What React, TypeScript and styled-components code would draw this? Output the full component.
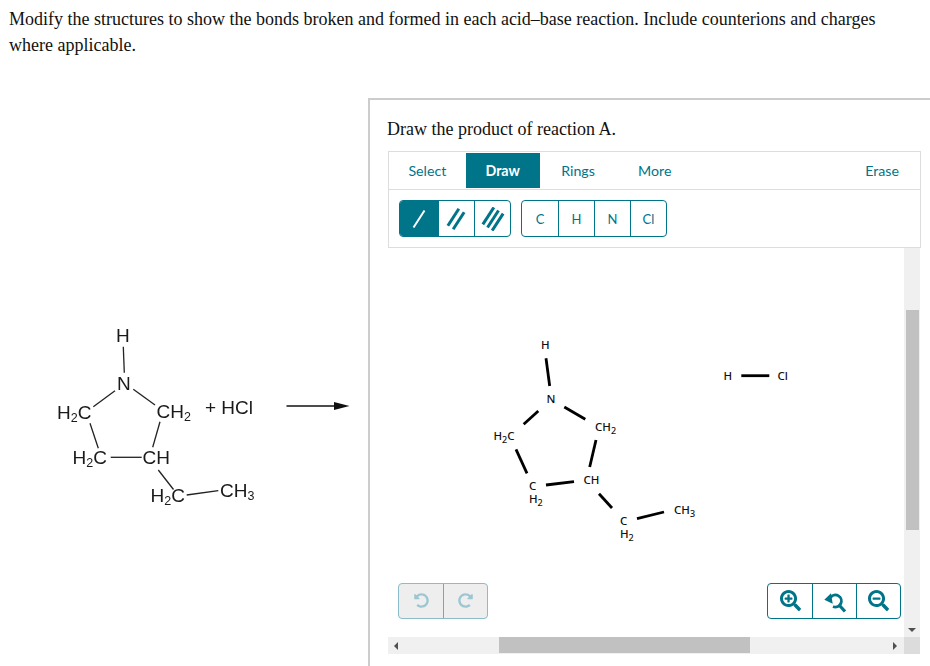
import React from 'react';
import styled, { createGlobalStyle } from 'styled-components';
import { FaRedoAlt, FaSearchMinus, FaSearchPlus, FaUndoAlt } from 'react-icons/fa';

const TEAL = '#007489';

const GlobalStyle = createGlobalStyle`
  html, body {
    margin: 0;
    padding: 0;
    background: #fff;
    overflow: hidden;
  }
  * {
    box-sizing: border-box;
  }
`;

const Page = styled.div`
  width: 930px;
  height: 666px;
  overflow: hidden;
  display: flex;
  flex-direction: column;
`;

const Prompt = styled.p`
  margin: 0;
  height: 98px;
  padding: 6px 40px 0 9px;
  font-family: 'Liberation Serif', serif;
  font-size: 18px;
  line-height: 26px;
  color: #111;
`;

const Row = styled.div`
  flex: 1;
  display: flex;
  min-height: 0;
`;

const Reaction = styled.div`
  width: 368px;
  flex: none;
  svg {
    display: block;
    filter: blur(0.35px);
  }
`;

const Panel = styled.section`
  flex: 1;
  border-left: 2px solid #ccc;
  border-top: 2px solid #ccc;
  padding: 19px 9px 0 18px;
  display: flex;
  flex-direction: column;
`;

const Question = styled.h2`
  margin: 0 0 12px -1px;
  font-family: 'Liberation Serif', serif;
  font-weight: 400;
  font-size: 18px;
  line-height: 20px;
  color: #111;
`;

const Toolbar = styled.div`
  border: 1.5px solid #ddd;
  border-bottom-width: 1px;
`;

const TabRow = styled.div`
  height: 38px;
  display: flex;
  align-items: flex-start;
  padding-top: 0.5px;
  border-bottom: 1.5px solid #ddd;
  font-family: 'Lato', sans-serif;
  font-size: 14.2px;
`;

const Tab = styled.button<{ $active?: boolean }>`
  width: ${(p) => (p.$active ? 74 : 76.7)}px;
  height: 35px;
  border: 0;
  padding: 0;
  font: inherit;
  font-weight: ${(p) => (p.$active ? 700 : 400)};
  color: ${(p) => (p.$active ? '#fff' : TEAL)};
  background: ${(p) => (p.$active ? TEAL : 'transparent')};
`;

const EraseTab = styled(Tab)`
  margin-left: auto;
  width: auto;
  padding-right: 21px;
`;

const ToolRow = styled.div`
  height: 57px;
  display: flex;
  align-items: center;
  gap: 10px;
  padding-left: 10px;
`;

const ButtonGroup = styled.div<{ $faded?: boolean }>`
  height: 36.5px;
  display: flex;
  border: 1px solid ${(p) => (p.$faded ? '#8bbcc7' : TEAL)};
  border-radius: 4px;
  overflow: hidden;
  background: ${(p) => (p.$faded ? '#eee' : '#fff')};
`;

const ToolButton = styled.button<{ $active?: boolean; $w: number; $faded?: boolean }>`
  width: ${(p) => p.$w}px;
  padding: 0;
  border: 0;
  border-left: 1px solid ${(p) => (p.$faded ? '#6fabb9' : TEAL)};
  background: ${(p) => (p.$active ? TEAL : 'transparent')};
  color: ${(p) => (p.$active ? '#fff' : p.$faded ? '#9cc6d1' : TEAL)};
  font-family: 'Lato', sans-serif;
  font-size: 13px;
  display: flex;
  align-items: center;
  justify-content: center;
  &:first-child {
    border-left: 0;
  }
`;

const Editor = styled.div`
  flex: 1;
  display: grid;
  grid-template-columns: 516px 16px;
  grid-template-rows: 389px 17px;
`;

const Viewport = styled.div`
  position: relative;
  overflow: hidden;
  svg.drawing {
    display: block;
  }
`;

const FloatingGroup = styled(ButtonGroup)<{ $side: 'left' | 'right' }>`
  position: absolute;
  bottom: 18px;
  ${(p) => (p.$side === 'left' ? 'left: 10px;' : 'right: 3px;')}
`;

const VerticalTrack = styled.div`
  background: #f0f0f0;
  padding: 62px 1px 0 2px;
  position: relative;
`;

const VerticalThumb = styled.div`
  height: 220px;
  background: #c1c1c1;
`;

const HorizontalTrack = styled.div`
  background: #f0f0f0;
  padding-left: 111px;
  position: relative;
`;

const HorizontalThumb = styled.div`
  width: 251px;
  height: 16px;
  background: #c1c1c1;
`;

const Corner = styled.div`
  background: #dcdcdc;
`;

const ArrowLeft = styled.i`
  position: absolute;
  left: 6px;
  top: 5px;
  border: 4px solid transparent;
  border-left: 0;
  border-right: 4px solid #505050;
`;

const ArrowRight = styled.i`
  position: absolute;
  right: 7px;
  top: 5px;
  border: 4px solid transparent;
  border-right: 0;
  border-left: 4px solid #505050;
`;

const ArrowDown = styled.i`
  position: absolute;
  left: 4px;
  bottom: 5px;
  border: 4px solid transparent;
  border-bottom: 0;
  border-top: 4px solid #505050;
`;

const Formula = styled.text`
  font-family: 'Liberation Sans', sans-serif;
  font-size: 19px;
  fill: #1a1a1a;
  tspan.sub {
    font-size: 12.5px;
  }
`;

const Atom = styled.text`
  font-family: 'Noto Sans', sans-serif;
  font-weight: 500;
  font-size: 11.5px;
  fill: #111;
  tspan.sub {
    font-size: 9px;
  }
`;

type Line = [number, number, number, number];

const reactantBonds: Line[] = [
  [123.3, 346.7, 124.3, 372.7],
  [115, 390.7, 93.3, 406.7],
  [133.3, 389.3, 155, 405],
  [90, 423.3, 98.3, 448.3],
  [110.7, 457.3, 141.7, 457.3],
  [160, 421.7, 152.7, 447.3],
  [158.3, 470, 173.5, 489.5],
  [186.7, 495, 218.3, 490.7],
];

const productBonds: Line[] = [
  [546, 358.3, 549.7, 386],
  [538.3, 411, 523.7, 424.3],
  [564.3, 407, 585.3, 419.3],
  [516, 449.3, 527, 473.3],
  [546, 485, 574, 481.7],
  [596, 440, 589.7, 467],
  [599, 493.7, 612, 508],
  [637, 518.7, 664, 512],
  [741.3, 375.7, 769.3, 375.7],
];

function Bonds({ lines, width, color }: { lines: Line[]; width: number; color: string }) {
  return (
    <g stroke={color} strokeWidth={width} fill="none">
      {lines.map((l, i) => (
        <line key={i} x1={l[0]} y1={l[1]} x2={l[2]} y2={l[3]} />
      ))}
    </g>
  );
}

function BondIcon({ count, color }: { count: number; color: string }) {
  const offsets = count === 1 ? [0] : count === 2 ? [-3.2, 3.2] : [-5.6, 0, 5.6];
  return (
    <svg width="24" height="24" viewBox="0 0 24 24">
      {offsets.map((o) => (
        <line
          key={o}
          x1={6.5 + o * 0.83}
          y1={20.5 + o * 0.55}
          x2={17.5 + o * 0.83}
          y2={3.5 + o * 0.55}
          stroke={color}
          strokeWidth={count === 1 ? 2 : 3}
        />
      ))}
    </svg>
  );
}

function ZoomResetIcon() {
  return (
    <svg width="24" height="24" viewBox="0 0 24 24" fill="none" stroke={TEAL}>
      <path d="M7.5 8.5 A6 6 0 1 1 10 17.5" strokeWidth="2.8" />
      <polygon points="1.3,10.8 8,4.2 9.7,14.8" fill={TEAL} stroke="none" />
      <line x1="17" y1="17" x2="22" y2="22.5" strokeWidth="3.2" />
    </svg>
  );
}

function Reactant() {
  return (
    <svg width="368" height="568" viewBox="0 98 368 568">
      <Bonds lines={reactantBonds} width={1.3} color="#222" />
      <Formula x="116" y="341.5">H</Formula>
      <Formula x="117" y="389.5">N</Formula>
      <Formula x="57" y="419">H<tspan className="sub" dy="3">2</tspan><tspan dy="-3">C</tspan></Formula>
      <Formula x="156.5" y="418">CH<tspan className="sub" dy="3">2</tspan></Formula>
      <Formula x="72.5" y="464">H<tspan className="sub" dy="3">2</tspan><tspan dy="-3">C</tspan></Formula>
      <Formula x="142.5" y="464">CH</Formula>
      <Formula x="150.5" y="502">H<tspan className="sub" dy="3">2</tspan><tspan dy="-3">C</tspan></Formula>
      <Formula x="220" y="497">CH<tspan className="sub" dy="3">3</tspan></Formula>
      <Formula x="205" y="414">+ HCl</Formula>
      <line x1="286.5" y1="406" x2="338" y2="406" stroke="#111" strokeWidth="1.4" />
      <polygon points="334,402 349.5,406 334,410" fill="#111" />
    </svg>
  );
}

function Product() {
  return (
    <svg className="drawing" width="516" height="389" viewBox="388 248 516 389">
      <Bonds lines={productBonds} width={2.8} color="#000" />
      <Atom x="541" y="349">H</Atom>
      <Atom x="546.5" y="403">N</Atom>
      <Atom x="493.5" y="440">H<tspan className="sub" dy="3">2</tspan><tspan dy="-3">C</tspan></Atom>
      <Atom x="595" y="431">CH<tspan className="sub" dy="3">2</tspan></Atom>
      <Atom x="583.5" y="484">CH</Atom>
      <Atom x="529" y="490">C</Atom>
      <Atom x="529" y="503">H<tspan className="sub" dy="3">2</tspan></Atom>
      <Atom x="620" y="525">C</Atom>
      <Atom x="620" y="538">H<tspan className="sub" dy="3">2</tspan></Atom>
      <Atom x="674" y="514">CH<tspan className="sub" dy="3">3</tspan></Atom>
      <Atom x="723.5" y="380">H</Atom>
      <Atom x="777.5" y="380">Cl</Atom>
    </svg>
  );
}

export default function App() {
  return (
    <Page>
      <GlobalStyle />
      <Prompt>
        Modify the structures to show the bonds broken and formed in each acid–base reaction. Include
        counterions and charges where applicable.
      </Prompt>
      <Row>
        <Reaction>
          <Reactant />
        </Reaction>
        <Panel>
          <Question>Draw the product of reaction A.</Question>
          <Toolbar>
            <TabRow>
              <Tab>Select</Tab>
              <Tab $active>Draw</Tab>
              <Tab>Rings</Tab>
              <Tab>More</Tab>
              <EraseTab>Erase</EraseTab>
            </TabRow>
            <ToolRow>
              <ButtonGroup>
                <ToolButton $w={37.5} $active>
                  <BondIcon count={1} color="#fff" />
                </ToolButton>
                <ToolButton $w={36.5}>
                  <BondIcon count={2} color={TEAL} />
                </ToolButton>
                <ToolButton $w={36}>
                  <BondIcon count={3} color={TEAL} />
                </ToolButton>
              </ButtonGroup>
              <ButtonGroup>
                {['C', 'H', 'N', 'Cl'].map((atom) => (
                  <ToolButton key={atom} $w={36}>
                    {atom}
                  </ToolButton>
                ))}
              </ButtonGroup>
            </ToolRow>
          </Toolbar>
          <Editor>
            <Viewport>
              <Product />
              <FloatingGroup $side="left" $faded>
                <ToolButton $w={44} $faded>
                  <FaUndoAlt size={15} />
                </ToolButton>
                <ToolButton $w={44} $faded>
                  <FaRedoAlt size={15} />
                </ToolButton>
              </FloatingGroup>
              <FloatingGroup $side="right">
                <ToolButton $w={44}>
                  <FaSearchPlus size={21} />
                </ToolButton>
                <ToolButton $w={44}>
                  <ZoomResetIcon />
                </ToolButton>
                <ToolButton $w={44}>
                  <FaSearchMinus size={21} />
                </ToolButton>
              </FloatingGroup>
            </Viewport>
            <VerticalTrack>
              <VerticalThumb />
              <ArrowDown />
            </VerticalTrack>
            <HorizontalTrack>
              <ArrowLeft />
              <HorizontalThumb />
              <ArrowRight />
            </HorizontalTrack>
            <Corner />
          </Editor>
        </Panel>
      </Row>
    </Page>
  );
}
